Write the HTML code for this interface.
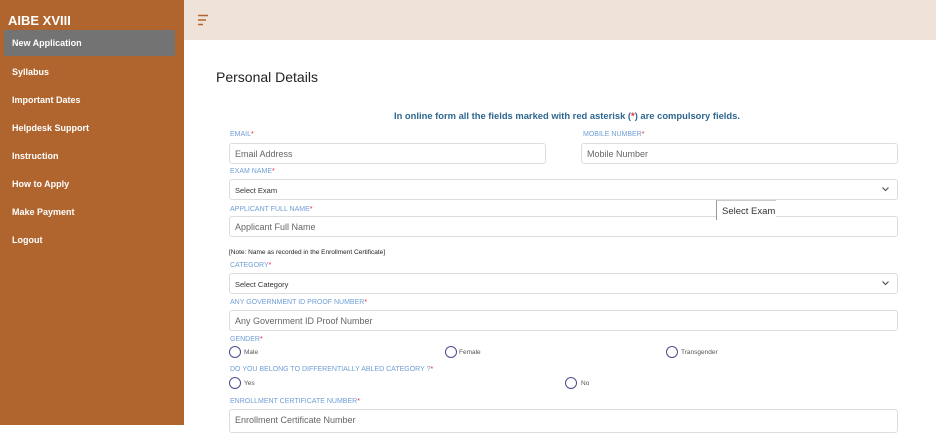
<!DOCTYPE html>
<html><head><style>
*{box-sizing:border-box;margin:0;padding:0}
body{width:936px;height:425px;overflow:hidden;font-family:"Liberation Sans",sans-serif;background:#fff;position:relative}
.sb{position:absolute;left:0;top:0;width:184px;height:425px;background:#b0652f;color:#fff}
.sb h1{position:absolute;left:8px;top:13px;font-size:13px;font-weight:bold}
.sb .act{position:absolute;left:4px;top:30px;width:171px;height:26px;background:#737373}
.sb div.i{position:absolute;left:12px;font-size:9px;font-weight:bold}
.hd{position:absolute;left:184px;top:0;right:0;height:40px;background:#efe3d9}
.t{position:absolute;font-size:14px;color:#222}
.lbl{position:absolute;font-size:7px;color:#6f9ed6}
.lbl b{color:#e23;font-weight:normal}
.in{position:absolute;height:21px;border:1px solid #ddd;border-radius:3px;font-size:9px;color:#666;padding:5px 5px}
.sel{font-size:7.5px;color:#333;padding-top:6px}
.car{position:absolute;right:8px;top:7px}
.r{position:absolute;width:12px;height:12px;border:1.3px solid #4a4a8a;border-radius:50%}
.rt{position:absolute;font-size:6.5px;color:#555}
</style></head><body>
<div class="sb"><h1>AIBE XVIII</h1><div class="act"></div>
<div class="i" style="top:38px">New Application</div>
<div class="i" style="top:67px">Syllabus</div>
<div class="i" style="top:95px">Important Dates</div>
<div class="i" style="top:123px">Helpdesk Support</div>
<div class="i" style="top:151px">Instruction</div>
<div class="i" style="top:179px">How to Apply</div>
<div class="i" style="top:207px">Make Payment</div>
<div class="i" style="top:235px">Logout</div>
</div>
<div class="hd"><svg style="position:absolute;left:13px;top:14px" width="12" height="14"><path d="M1 1.5h10M1 6h8M1 10.5h5" stroke="#b0652f" stroke-width="1.5"/></svg></div>
<div class="t" style="left:216px;top:69px">Personal Details</div>
<div style="position:absolute;left:394px;top:110px;font-size:9.4px;font-weight:bold;color:#2e6790;white-space:nowrap">In online form all the fields marked with red asterisk (<span style="color:#e23">*</span>) are compulsory fields.</div>
<div class="lbl" style="left:230px;top:131px">EMAIL<b>*</b></div>
<div class="lbl" style="left:583px;top:131px">MOBILE NUMBER<b>*</b></div>
<div class="in" style="left:229px;top:143px;width:317px">Email Address</div>
<div class="in" style="left:581px;top:143px;width:317px">Mobile Number</div>
<div class="lbl" style="left:230px;top:168px">EXAM NAME<b>*</b></div>
<div class="in sel" style="left:229px;top:179px;width:669px">Select Exam<svg class="car" width="7" height="5"><path d="M0.5 0.5l3 3 3-3" stroke="#555" fill="none" stroke-width="1.2"/></svg></div>
<div class="lbl" style="left:230px;top:206px">APPLICANT FULL NAME<b>*</b></div>
<div class="in" style="left:229px;top:216px;width:669px">Applicant Full Name</div>
<div style="position:absolute;left:716px;top:200px;width:60px;height:20px;background:#fff;border-left:1px solid #999;border-top:1px solid #ccc;font-size:9.5px;color:#333;padding:5px 5px;white-space:nowrap;overflow:hidden">Select Exam</div>
<div style="position:absolute;left:229px;top:249px;font-size:6.5px;color:#222">[Note: Name as recorded in the Enrollment Certificate]</div>
<div class="lbl" style="left:230px;top:262px">CATEGORY<b>*</b></div>
<div class="in sel" style="left:229px;top:273px;width:669px">Select Category<svg class="car" width="7" height="5"><path d="M0.5 0.5l3 3 3-3" stroke="#555" fill="none" stroke-width="1.2"/></svg></div>
<div class="lbl" style="left:230px;top:299px">ANY GOVERNMENT ID PROOF NUMBER<b>*</b></div>
<div class="in" style="left:229px;top:310px;width:669px">Any Government ID Proof Number</div>
<div class="lbl" style="left:230px;top:336px">GENDER<b>*</b></div>
<div class="r" style="left:229px;top:346px"></div><div class="rt" style="left:244px;top:349px">Male</div>
<div class="r" style="left:445px;top:346px"></div><div class="rt" style="left:459px;top:349px">Female</div>
<div class="r" style="left:666px;top:346px"></div><div class="rt" style="left:681px;top:349px">Transgender</div>
<div class="lbl" style="left:230px;top:366px">DO YOU BELONG TO DIFFERENTIALLY ABLED CATEGORY ?<b>*</b></div>
<div class="r" style="left:229px;top:377px"></div><div class="rt" style="left:244px;top:380px">Yes</div>
<div class="r" style="left:565px;top:377px"></div><div class="rt" style="left:581px;top:380px">No</div>
<div class="lbl" style="left:230px;top:398px">ENROLLMENT CERTIFICATE NUMBER<b>*</b></div>
<div class="in" style="left:229px;top:409px;width:669px;height:24px">Enrollment Certificate Number</div>
</body></html>
